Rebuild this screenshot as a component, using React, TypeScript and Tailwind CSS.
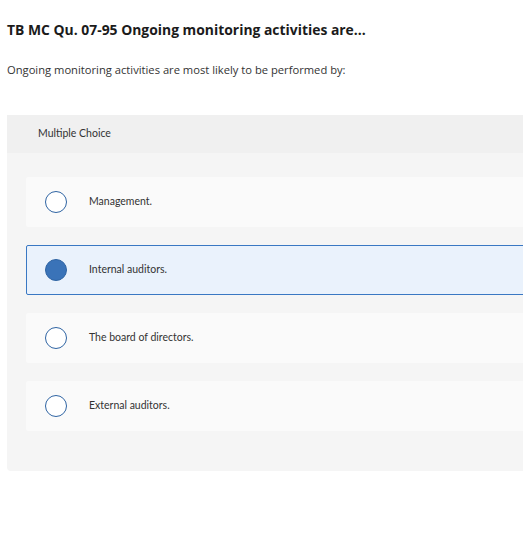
const options = [
  { label: "Management.", selected: false },
  { label: "Internal auditors.", selected: true },
  { label: "The board of directors.", selected: false },
  { label: "External auditors.", selected: false },
];

function Radio({ selected }: { selected: boolean }) {
  return selected ? (
    <span className="block w-[22px] h-[22px] rounded-full bg-[#3a73b8] border-[1.5px] border-[#2f64a3]" />
  ) : (
    <span className="block w-[22px] h-[22px] rounded-full bg-white border-[1.5px] border-[#2f64a3]" />
  );
}

export default function App() {
  return (
    <div className="w-[523px] h-[533px] overflow-hidden bg-white text-[#222] font-['Lato','Liberation_Sans',sans-serif]">
      <h1 className="pl-[7px] pt-[21px] font-['Open_Sans',sans-serif] text-[13.9px] font-bold leading-[18px] text-[#1b1b1b]">
        TB MC Qu. 07-95 Ongoing monitoring activities are...
      </h1>
      <p className="pl-[7px] pt-[24px] font-['Open_Sans',sans-serif] text-[11.2px] leading-[14px] text-[#333]">
        Ongoing monitoring activities are most likely to be performed by:
      </p>

      <div className="ml-[7px] mt-[38px] w-[560px] bg-[#f5f5f5] rounded-sm">
        <div className="h-[38px] bg-[#f0f0f0] flex items-center pl-[31px] text-[10.5px] text-[#333]">
          Multiple Choice
        </div>
        <div className="pl-[19px] pt-[24px] pb-[40px] flex flex-col gap-[18px]">
          {options.map((o) => (
            <div
              key={o.label}
              className={
                o.selected
                  ? "h-[50px] flex items-center rounded-[2px] border border-[#3a78c3] bg-[#eaf2fc] pl-[18px]"
                  : "h-[50px] flex items-center rounded-[2px] border border-transparent bg-[#fafafa] pl-[18px]"
              }
            >
              <Radio selected={o.selected} />
              <span className="ml-[22px] text-[10.5px] text-[#333]">{o.label}</span>
            </div>
          ))}
        </div>
      </div>
    </div>
  );
}
